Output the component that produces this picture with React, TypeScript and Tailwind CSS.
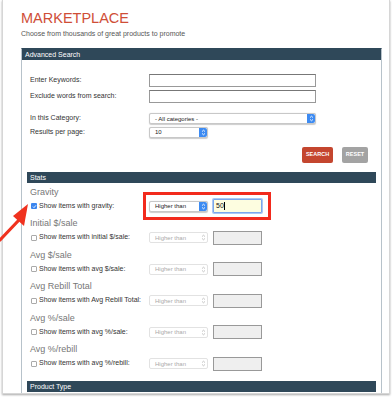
function Stepper({ active }: { active: boolean }) {
  if (active) {
    return (
      <span className="flex h-full w-[8px] items-center justify-center rounded-r-[2px] bg-[#3d8bf2]">
        <svg width="5" height="7" viewBox="0 0 5 7" fill="none" stroke="white" strokeWidth="0.9">
          <path d="M1 2.6 L2.5 1.2 L4 2.6" />
          <path d="M1 4.4 L2.5 5.8 L4 4.4" />
        </svg>
      </span>
    );
  }
  return (
    <span className="flex h-full w-[8px] items-center justify-center">
      <svg width="5" height="7" viewBox="0 0 5 7" fill="none" stroke="#b5b5b5" strokeWidth="0.8">
        <path d="M1 2.6 L2.5 1.2 L4 2.6" />
        <path d="M1 4.4 L2.5 5.8 L4 4.4" />
      </svg>
    </span>
  );
}

function Select({ text, width, active = true }: { text: string; width: string; active?: boolean }) {
  return (
    <div
      className={`flex h-[11px] items-center justify-between rounded-[2px] border bg-white pl-[5px] ${width} ${
        active ? "border-[#c8c8c8] text-[#222] shadow-[0_0.5px_1px_rgba(0,0,0,0.2)]" : "border-[#e2e2e2] text-[#aaa]"
      }`}
    >
      <span className="text-[6px] leading-none">{text}</span>
      <Stepper active={active} />
    </div>
  );
}

function Checkbox({ checked }: { checked: boolean }) {
  if (checked) {
    return (
      <span className="flex h-[6px] w-[6px] items-center justify-center rounded-[1px] bg-[#3b86ee]">
        <svg width="5" height="5" viewBox="0 0 5 5" fill="none" stroke="white" strokeWidth="0.9">
          <path d="M1 2.6 L2 3.6 L4 1.3" />
        </svg>
      </span>
    );
  }
  return <span className="h-[6px] w-[6px] rounded-[1px] border border-[#aaa] bg-white" />;
}

const stats = [
  { title: "Gravity", label: "Show items with gravity:", on: true },
  { title: "Initial $/sale", label: "Show items with initial $/sale:", on: false },
  { title: "Avg $/sale", label: "Show items with avg $/sale:", on: false },
  { title: "Avg Rebill Total", label: "Show items with Avg Rebill Total:", on: false },
  { title: "Avg %/sale", label: "Show items with avg %/sale:", on: false },
  { title: "Avg %/rebill", label: "Show items with avg %/rebill:", on: false },
];

export default function App() {
  return (
    <div className="relative h-[400px] w-[392px] overflow-hidden bg-white font-['Liberation_Sans',Arial,sans-serif]">
      <div className="ml-[2px] h-[394px] w-[388px] overflow-hidden border-x border-b border-[#d6d6d6] pl-[18px] pt-[10px] shadow-[0_1px_2px_rgba(0,0,0,0.35)]">
        <h1 className="text-[14.5px] leading-[17px] text-[#cf4e37]">MARKETPLACE</h1>
        <p className="mt-[1.5px] text-[7px] leading-[9px] text-[#555]">Choose from thousands of great products to promote</p>

        <div className="mt-[10.5px] h-[400px] w-[361px] border border-[#b7c2ca] border-t-[#2f4859]">
          <div className="h-[11px] bg-[#2f4859] px-[3px] text-[7px] leading-[11px] text-white">Advanced Search</div>

          <div className="pl-[8px] pr-[13px] pt-[14px]">
            <div className="flex items-center">
              <span className="w-[119px] text-[7px] text-[#333]">Enter Keywords:</span>
              <div className="h-[13px] w-[167px] border border-[#999] border-t-[#777] bg-white" />
            </div>
            <div className="mt-[3px] flex items-center">
              <span className="w-[119px] text-[7px] text-[#333]">Exclude words from search:</span>
              <div className="h-[13px] w-[167px] border border-[#999] border-t-[#777] bg-white" />
            </div>
            <div className="mt-[10px] flex items-center">
              <span className="w-[119px] text-[7px] text-[#333]">In this Category:</span>
              <Select text="- All categories -" width="w-[167px]" />
            </div>
            <div className="mt-[2.5px] flex items-center">
              <span className="w-[119px] text-[7px] text-[#333]">Results per page:</span>
              <Select text="10" width="w-[59px]" />
            </div>
            <div className="mt-[9px] flex justify-end gap-[9px]">
              <button className="h-[16px] w-[31px] rounded-[2px] bg-[#c4462f] text-[5.5px] font-bold text-white">SEARCH</button>
              <button className="h-[16px] w-[26px] rounded-[2px] bg-[#a3a3a3] text-[5.5px] font-bold text-white">RESET</button>
            </div>
          </div>

          <div className="mx-[5px] mt-[9px]">
            <div className="h-[11px] bg-[#2f4859] px-[3px] text-[7px] leading-[11px] text-white">Stats</div>
            <div className="pl-[3px] pt-[3px]">
              {stats.map((s) => (
                <div key={s.title} className="h-[31.5px]">
                  <div className="text-[9px] leading-[13px] text-[#777]">{s.title}</div>
                  <div className="flex h-[15px] items-center">
                    <div className="flex w-[119px] items-center gap-[2px] pl-[1px]">
                      <Checkbox checked={s.on} />
                      <span className="text-[7px] text-[#333]">{s.label}</span>
                    </div>
                    <Select text="Higher than" width="w-[59px]" active={s.on} />
                    {s.on ? (
                      <div className="ml-[5px] flex h-[14px] w-[49px] items-center rounded-[1px] border border-[#7aa7ec] bg-[#fdfde0] pl-[2px] text-[7px] text-[#111] shadow-[0_0_0_1px_#a9c8f5]">
                        50<span className="ml-[0.5px] h-[8px] w-[0.6px] bg-black" />
                      </div>
                    ) : (
                      <div className="ml-[5px] h-[14px] w-[49px] border border-[#999] bg-[#efefef]" />
                    )}
                  </div>
                </div>
              ))}
            </div>
            <div className="mt-[6px] h-[11px] bg-[#2f4859] px-[3px] text-[7px] leading-[11px] text-white">Product Type</div>
          </div>
        </div>
      </div>

      <div className="absolute left-[143px] top-[192px] h-[28px] w-[128px] border-[3px] border-[#f22a1d]" />

      <svg className="absolute left-0 top-[198px]" width="36" height="46" viewBox="0 0 36 46">
        <path d="M0 42 L19 22" stroke="#f0321f" strokeWidth="3.2" strokeLinecap="round" />
        <path d="M28 6 L13 18 L24 28 Z" fill="#f0321f" />
      </svg>
    </div>
  );
}
